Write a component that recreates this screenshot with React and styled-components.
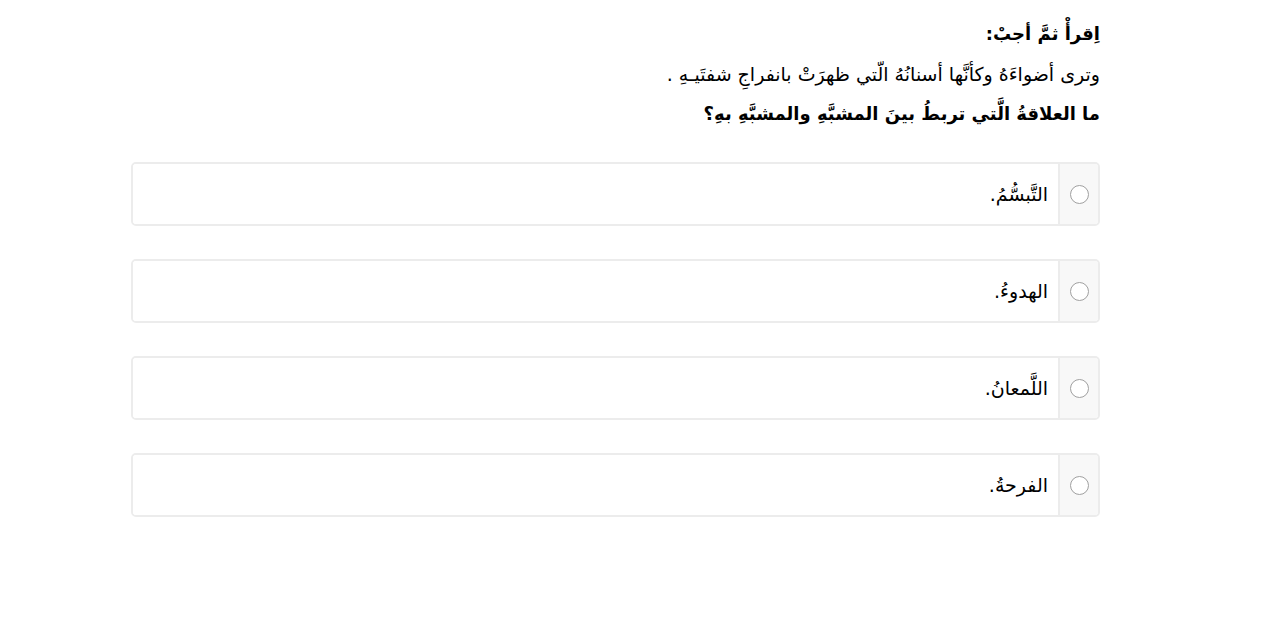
import React, { useState } from 'react';
import styled, { createGlobalStyle } from 'styled-components';

const GlobalStyle = createGlobalStyle`
    body {
        margin: 0;
        background: #ffffff;
        font-family: "DejaVu Sans", "Noto Sans", sans-serif;
        color: #000;
    }
`;

const Page = styled.div`
    direction: rtl;
    padding: 14px 176px 40px 131px;
`;

const Question = styled.div`
    margin-bottom: 28px;
`;

const Line = styled.p`
    margin: 0;
    font-size: ${props => (props.bold ? '18px' : '19px')};
    line-height: 40px;
    font-weight: ${props => (props.bold ? 700 : 400)};
`;

const Options = styled.div`
    display: flex;
    flex-direction: column;
    gap: 33px;
`;

const Option = styled.label`
    display: flex;
    height: 64px;
    box-sizing: border-box;
    border: 2px solid #ececec;
    border-radius: 5px;
    overflow: hidden;
    cursor: pointer;
`;

const RadioCell = styled.div`
    width: 38px;
    flex: none;
    display: flex;
    align-items: center;
    justify-content: center;
    background: #f8f8f8;
    border-left: 2px solid #ececec;
`;

const Radio = styled.span`
    width: 19px;
    height: 19px;
    box-sizing: border-box;
    border-radius: 50%;
    border: 1px solid ${props => (props.checked ? '#0d6efd' : '#a0a0a0')};
    background: #fff;
    box-shadow: ${props => (props.checked ? 'inset 0 0 0 4px #0d6efd' : 'none')};
`;

const OptionText = styled.div`
    flex: 1;
    display: flex;
    align-items: center;
    padding-right: 10px;
    font-size: 19px;
    background: #fff;
`;

const answers = ['التَّبسُّمُ.', 'الهدوءُ.', 'اللَّمعانُ.', 'الفرحةُ.'];

export default function App() {
    const [picked, setPicked] = useState(null);
    return (
        <>
            <GlobalStyle />
            <Page>
                <Question>
                    <Line bold>اِقرأْ ثمَّ أجبْ:</Line>
                    <Line>وترى أضواءَهُ وكأنَّها أسنانُهُ الّتي ظهرَتْ بانفراجِ شفتَيـهِ .</Line>
                    <Line bold>ما العلاقةُ الَّتي تربطُ بينَ المشبَّهِ والمشبَّهِ بهِ؟</Line>
                </Question>
                <Options>
                    {answers.map((a, i) => (
                        <Option key={i} onClick={() => setPicked(i)}>
                            <RadioCell>
                                <Radio checked={picked === i} />
                            </RadioCell>
                            <OptionText>{a}</OptionText>
                        </Option>
                    ))}
                </Options>
            </Page>
        </>
    );
}
